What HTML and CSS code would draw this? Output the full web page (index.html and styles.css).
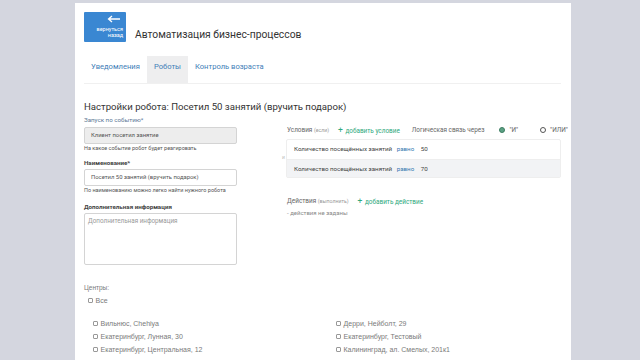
FILE: index.html
```html
<!DOCTYPE html>
<html lang="ru">
<head>
    <meta charset="UTF-8">
    <title>Роботы</title>
    <link rel="stylesheet" href="styles.css">
</head>
<body>
<div class="page">
    <div class="header">
        <a class="back" href="#">
            <svg width="14" height="8" viewBox="0 0 14 8"><path d="M13 4H2M5 1L1.5 4 5 7" fill="none" stroke="#fff" stroke-width="1.3"/></svg>
            <span>вернуться<br>назад</span>
        </a>
        <h1>Автоматизация бизнес-процессов</h1>
    </div>
    <ul class="tabs">
        <li><a href="#">Уведомления</a></li>
        <li class="active"><a href="#">Роботы</a></li>
        <li><a href="#">Контроль возраста</a></li>
    </ul>

    <h2>Настройки робота: Посетил 50 занятий (вручить подарок)</h2>

    <div class="settings">
        <div class="leftcol">
            <div class="label blue">Запуск по событию*</div>
            <div class="input readonly">Клиент посетил занятие</div>
            <div class="help">На какое событие робот будет реагировать</div>

            <div class="label bold name">Наименование*</div>
            <div class="input">Посетил 50 занятий (вручить подарок)</div>
            <div class="help">По наименованию можно легко найти нужного робота</div>

            <div class="label bold info">Дополнительная информация</div>
            <div class="textarea">Дополнительная информация</div>
        </div>

        <div class="rightcol">
            <div class="toolbar">
                <span class="cap">Условия <small>(если)</small></span>
                <a class="add" href="#"><b>+</b> добавить условие</a>
                <span class="cap">Логическая связь через</span>
                <span class="radio on"><i></i>"И"</span>
                <span class="radio"><i></i>"ИЛИ"</span>
            </div>
            <div class="conds">
                <span class="and">и</span>
                <div class="cond">Количество посещённых занятий <span class="op">равно</span> 50</div>
                <div class="cond odd">Количество посещённых занятий <span class="op">равно</span> 70</div>
            </div>

            <div class="toolbar actions">
                <span class="cap">Действия <small>(выполнить)</small></span>
                <a class="add" href="#"><b>+</b> добавить действие</a>
            </div>
            <div class="empty">- действия не заданы</div>
        </div>
    </div>

    <div class="centers">
        <div class="cap">Центры:</div>
        <label class="all"><i></i>Все</label>
        <div class="list">
            <label><i></i>Вильнюс, Chehiya</label>
            <label><i></i>Дерри, Нейболт, 29</label>
            <label><i></i>Екатеринбург, Лунная, 30</label>
            <label><i></i>Екатеринбург, Тестовый</label>
            <label><i></i>Екатеринбург, Центральная, 12</label>
            <label><i></i>Калининград, ал. Смелых, 201к1</label>
            <label><i></i>Калининград, Ленина, 41</label>
            <label><i></i>Краснодар, Северная, 27</label>
        </div>
    </div>
</div>
</body>
</html>
```

FILE: styles.css
```css
* {
    margin: 0;
    padding: 0;
    box-sizing: border-box;
}
body {
    background-color: #d4d6df;
    font-family: Roboto, "Liberation Sans", sans-serif;
    color: #333;
    overflow: hidden;
}
a {
    text-decoration: none;
}
.page {
    width: 496px;
    height: 400px;
    margin: 3px 0 0 75px;
    padding: 9px 10px 0 9px;
    background-color: #fff;
}

.header {
    display: flex;
    align-items: flex-end;
    height: 30px;
}
.back {
    width: 42px;
    height: 30px;
    background-color: #3a87d2;
    border-radius: 1px;
    display: flex;
    flex-direction: column;
    align-items: flex-end;
    padding: 2px 3px 0 0;
    color: #fff;
    font-size: 5.5px;
    line-height: 6px;
    text-align: right;
}
.back svg {
    margin: 1px 2px 3px 0;
}
.header h1 {
    font-weight: normal;
    font-size: 10.3px;
    color: #333;
    margin: 0 0 1px 9px;
}

.tabs {
    list-style: none;
    display: flex;
    margin-top: 14px;
    height: 28px;
    border-bottom: 1px solid #f0f0f0;
}
.tabs li a {
    display: block;
    height: 27px;
    line-height: 21px;
    padding: 0 7px;
    font-size: 7.6px;
    color: #3f80b8;
}
.tabs li.active a {
    background-color: #eeeeef;
}

h2 {
    font-weight: normal;
    font-size: 9.6px;
    color: #333;
    margin-top: 16px;
    line-height: 14px;
}

.settings {
    display: flex;
    margin-top: 2px;
}
.leftcol {
    width: 153px;
}
.label {
    font-size: 6.2px;
    line-height: 8px;
    white-space: nowrap;
}
.label.blue {
    color: #5b7896;
}
.label.bold {
    font-weight: bold;
    color: #444;
}
.label.name {
    margin-top: 7px;
}
.label.info {
    margin-top: 9px;
}
.input {
    height: 17px;
    margin-top: 2px;
    border: 1px solid #d4d4d4;
    border-radius: 2px;
    font-size: 5.9px;
    line-height: 15px;
    padding-left: 6px;
    color: #555;
    white-space: nowrap;
}
.input.readonly {
    background-color: #ededed;
    margin-top: 3px;
}
.help {
    font-size: 5.5px;
    line-height: 7px;
    margin-top: 1px;
    color: #555;
    white-space: nowrap;
}
.textarea {
    height: 52px;
    margin-top: 2px;
    border: 1px solid #d4d4d4;
    border-radius: 2px;
    font-size: 6.3px;
    padding: 3px 3px;
    color: #999;
}

.rightcol {
    width: 279px;
    margin-left: 45px;
    padding-top: 9px;
}
.toolbar {
    display: flex;
    align-items: center;
    height: 10px;
    padding-left: 5px;
    font-size: 6.4px;
    color: #666;
    white-space: nowrap;
}
.toolbar .cap {
    margin-right: 9px;
}
.toolbar small {
    font-size: 5.2px;
    color: #999;
}
.add {
    color: #2ea87d;
    margin-right: 12px;
}
.add b {
    font-size: 8.5px;
    font-weight: normal;
    margin-right: 1px;
}
.radio {
    display: flex;
    align-items: center;
    margin-left: 6px;
}
.radio i {
    width: 6px;
    height: 6px;
    border-radius: 50%;
    border: 1.4px solid #555;
    margin-right: 4px;
}
.radio.on i {
    border-color: #3d7d62;
    background-color: #5ca184;
}
.radio + .radio {
    margin-left: 22px;
}
.conds {
    position: relative;
    margin: 4px 0 0 4px;
    border: 1px solid #eee;
    border-radius: 2px;
}
.and {
    position: absolute;
    left: -5px;
    top: 14px;
    font-size: 5px;
    color: #bbb;
}
.cond {
    height: 19px;
    line-height: 18px;
    padding-left: 7px;
    font-size: 6.2px;
    color: #444;
}
.cond.odd {
    height: 18px;
    background-color: #f2f3f5;
    border-top: 1px solid #eee;
}
.op {
    color: #3577b0;
    margin: 0 5px 0 3px;
}
.actions {
    margin-top: 18px;
}
.empty {
    font-size: 6px;
    color: #888;
    margin: 3px 0 0 5px;
}

.centers {
    margin-top: 19px;
    font-family: "Liberation Sans", Arial, sans-serif;
    font-size: 7px;
    color: #7a7a7a;
}
.centers .cap {
    font-size: 6.5px;
}
.centers label {
    display: flex;
    align-items: center;
    height: 13px;
}
.centers label i {
    width: 5px;
    height: 5px;
    border: 1px solid #999;
    border-radius: 1px;
    margin-right: 2.5px;
}
.all {
    margin: 3px 0 0 4px;
}
.list {
    display: grid;
    grid-template-columns: 243px 200px;
    margin: 10px 0 0 9px;
}
```
